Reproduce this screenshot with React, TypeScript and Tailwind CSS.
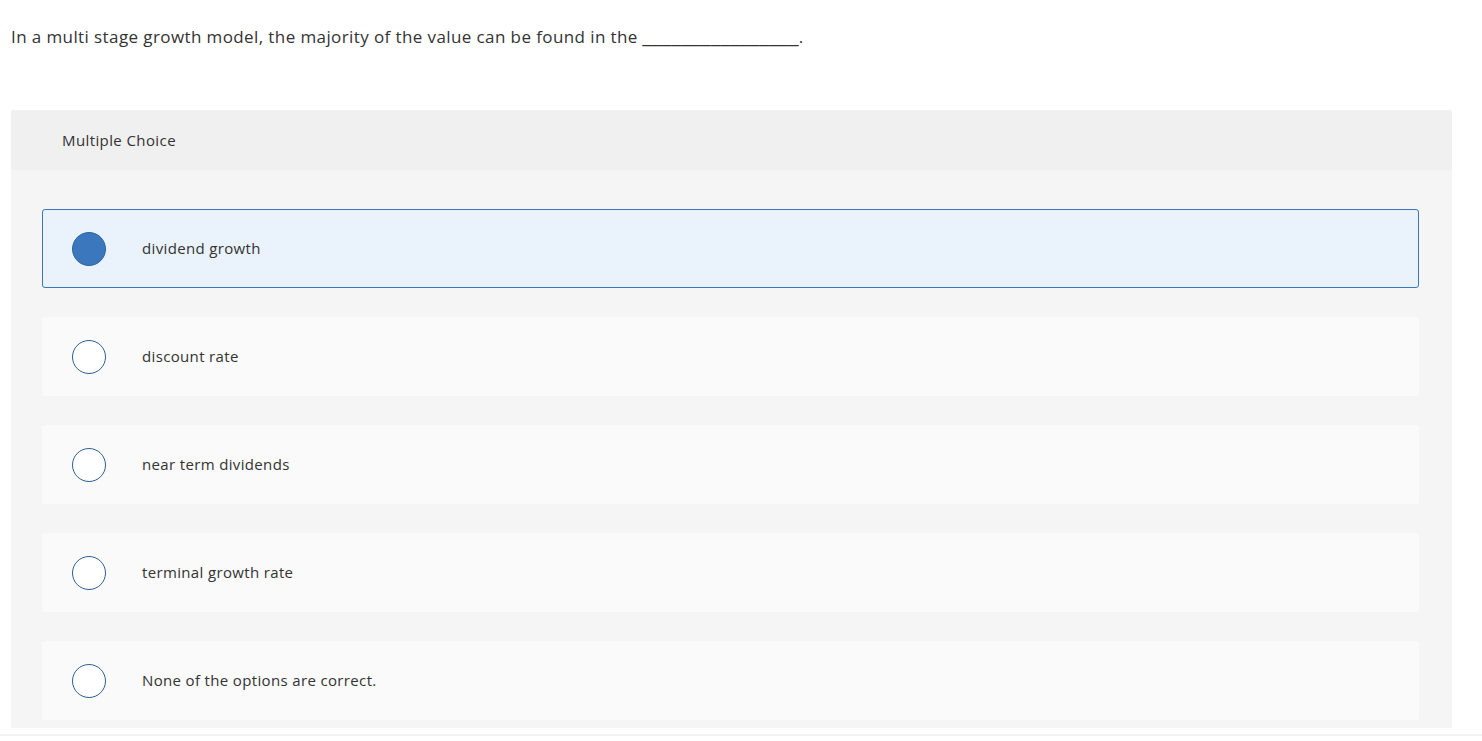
import { useState } from "react";

const options = [
  "dividend growth",
  "discount rate",
  "near term dividends",
  "terminal growth rate",
  "None of the options are correct.",
];

export default function App() {
  const [selected, setSelected] = useState(0);

  return (
    <div className="min-h-screen bg-white font-['Open_Sans','Liberation_Sans',sans-serif] text-[#333]">
      <p className="px-[11px] pt-[26px] text-[17px] leading-[22px] tracking-[0.4px] text-[#333]">
        In a multi stage growth model, the majority of the value can be found in the{" "}
        <span className="font-['Liberation_Sans',sans-serif] tracking-[0.3px]">________________</span>.
      </p>

      <div className="mt-[61px] mr-[30px] ml-[11px] overflow-hidden rounded-t-[3px] bg-[#f5f5f5]">
        <div className="flex h-[60px] items-center bg-[#f0f0f0] pl-[51px] text-[15px] tracking-[0.4px] text-[#333]">
          Multiple Choice
        </div>
        <div className="flex flex-col gap-[29px] pt-[39px] pr-[33px] pb-[8px] pl-[31px]">
          {options.map((opt, i) => {
            const active = i === selected;
            return (
              <button
                key={opt}
                type="button"
                onClick={() => setSelected(i)}
                className={
                  active
                    ? "flex h-[79px] items-center rounded-[3px] border border-[#3a76bb] bg-[#eaf2fb] text-left"
                    : "flex h-[79px] items-center rounded-[3px] border border-transparent bg-[#fafafa] text-left"
                }
              >
                <span
                  className={
                    active
                      ? "ml-[29px] h-[34px] w-[34px] shrink-0 rounded-full border border-[#2d64a3] bg-[#3b77bc]"
                      : "ml-[29px] h-[34px] w-[34px] shrink-0 rounded-full border-[1.5px] border-[#2b5f94] bg-white"
                  }
                />
                <span className="ml-[36px] text-[15px] tracking-[0.35px] text-[#333]">{opt}</span>
              </button>
            );
          })}
        </div>
      </div>
      <div className="mt-[6px] h-[2px] bg-[#f2f2f2]" />
    </div>
  );
}
